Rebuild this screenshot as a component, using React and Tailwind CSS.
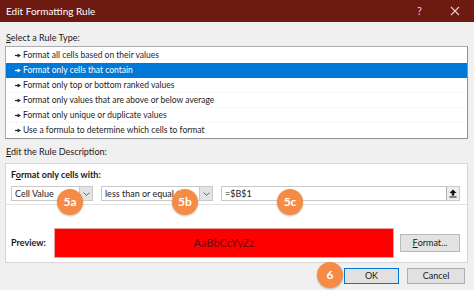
import React from "react";

const ruleTypes = [
  "Format all cells based on their values",
  "Format only cells that contain",
  "Format only top or bottom ranked values",
  "Format only values that are above or below average",
  "Format only unique or duplicate values",
  "Use a formula to determine which cells to format",
];

const Arrow = ({ color }) => (
  <svg width="6" height="5" viewBox="0 0 6 5" className="shrink-0">
    <path d="M0 2.5h3" stroke={color} strokeWidth="1.2" />
    <path d="M2.6 0.4L6 2.5 2.6 4.6z" fill={color} />
  </svg>
);

const Chevron = () => (
  <svg width="7" height="4" viewBox="0 0 7 4">
    <path d="M0.6 0.6L3.5 3.4 6.4 0.6" fill="none" stroke="#555" strokeWidth="0.9" />
  </svg>
);

const Badge = ({ label, className }) => (
  <div
    className={`absolute w-[26px] h-[26px] rounded-full bg-[#f58b45] text-white font-bold text-[12px] flex items-center justify-center shadow-[0_1px_2px_rgba(0,0,0,0.25)] ${className}`}
  >
    {label}
  </div>
);

const Dropdown = ({ text, width }) => (
  <div className={`${width} h-[15px] flex bg-white border border-[#c9c9c9]`}>
    <div className="flex-1 pl-[3px] text-[9px] leading-[13px] text-[#222] whitespace-nowrap overflow-hidden">
      {text}
    </div>
    <div className="w-[13px] bg-[#e3e3e3] border-l border-[#c9c9c9] flex items-center justify-center">
      <Chevron />
    </div>
  </div>
);

export default function App() {
  return (
    <div
      className="relative w-[474px] h-[290px] overflow-hidden bg-[#f0f0f0] text-[#1a1a1a]"
      style={{ fontFamily: 'Lato, "Noto Sans", sans-serif' }}
    >
      {/* Title bar */}
      <div className="h-[22px] bg-[#6d1a11] flex items-center pl-[6px] pr-[14px]">
        <span className="text-white text-[10px]">Edit Formatting Rule</span>
        <span className="ml-auto text-[#e9c5c0] text-[11px] mr-[28px]">?</span>
        <svg width="10" height="10" viewBox="0 0 10 10">
          <path d="M1 1L9 9M9 1L1 9" stroke="#ecc9c4" strokeWidth="1.1" />
        </svg>
      </div>

      <div className="pl-[5px] pr-[6px]">
        <div className="pt-[9px] pl-[1px] h-[23px] text-[9px] leading-[14px]">
          <span className="underline">S</span>elect a Rule Type:
        </div>

        {/* Rule type list */}
        <div className="mt-px bg-white border border-[#a9abb0] border-r-[#8d9096] border-b-[#8d9096] pt-px">
          {ruleTypes.map((t, i) => (
            <div
              key={t}
              className={`h-[15px] flex items-center gap-[2px] pl-[9px] text-[8.5px] whitespace-nowrap ${
                i === 1 ? "bg-[#0078d7] text-white" : "text-[#1e1e1e]"
              } ${i > 1 && i < 5 ? "border-b border-[#f7f7f7]" : ""}`}
            >
              <Arrow color={i === 1 ? "#ffffff" : "#222"} />
              {t}
            </div>
          ))}
        </div>

        <div className="mt-[6px] pl-[1px] h-[14px] text-[9px] leading-[14px]">
          <span className="underline">E</span>dit the Rule Description:
        </div>

        {/* Rule description */}
        <div className="mt-[4px] bg-white border border-[#d6d6d6]">
          <div className="pt-[4px] pl-[5px] pr-[7px]">
            <div className="h-[14px] text-[9px] leading-[14px] font-bold">
              F<span className="underline">o</span>rmat only cells with:
            </div>
            <div className="mt-[4px] flex gap-[8px]">
              <Dropdown text="Cell Value" width="w-[82px]" />
              <Dropdown text="less than or equal to" width="w-[112px]" />
              <div className="flex-1 h-[15px] flex bg-white border border-[#c9c9c9]">
                <div className="flex-1 pl-[3px] text-[9px] leading-[13px] text-[#222]">=$B$1</div>
                <div className="w-[13px] bg-[#ececec] border-l border-[#b0b0b0] flex items-center justify-center">
                  <svg width="8" height="9" viewBox="0 0 8 9">
                    <path d="M4 0.5L7.5 4H5.3V6.5H2.7V4H0.5z" fill="#111" />
                    <path d="M0.5 8h7" stroke="#111" strokeWidth="1" />
                  </svg>
                </div>
              </div>
            </div>
          </div>
          <div className="mt-[3px] border-t border-[#e3e3e3]" />
          <div className="mt-[23px] pb-[4px] pl-[5px] pr-[7px] flex items-center">
            <div className="w-[43px] text-[9px] font-bold">Preview:</div>
            <div className="w-[340px] h-[30px] bg-[#ff0000] border border-[#eaa5a0] flex items-center justify-center text-[11px] font-medium text-[#7a0707]">
              AaBbCcYyZz
            </div>
            <div className="ml-auto w-[60px] h-[18px] bg-[#e3e3e3] border border-[#b9b9b9] flex items-center justify-center text-[9px]">
              <span className="underline">F</span>ormat...
            </div>
          </div>
        </div>

        {/* Footer buttons */}
        <div className="mt-[5px] flex justify-end gap-[8px] pr-[3px]">
          <div className="w-[55px] h-[16px] bg-[#e1e1e1] border border-[#0078d7] flex items-center justify-center text-[9px]">
            OK
          </div>
          <div className="w-[58px] h-[16px] bg-[#e1e1e1] border border-[#adadad] flex items-center justify-center text-[9px]">
            Cancel
          </div>
        </div>
      </div>

      <Badge label="5a" className="left-[57px] top-[189px]" />
      <Badge label="5b" className="left-[172px] top-[189px]" />
      <Badge label="5c" className="left-[277px] top-[189px]" />
      <Badge label="6" className="left-[317px] top-[262px]" />
    </div>
  );
}
